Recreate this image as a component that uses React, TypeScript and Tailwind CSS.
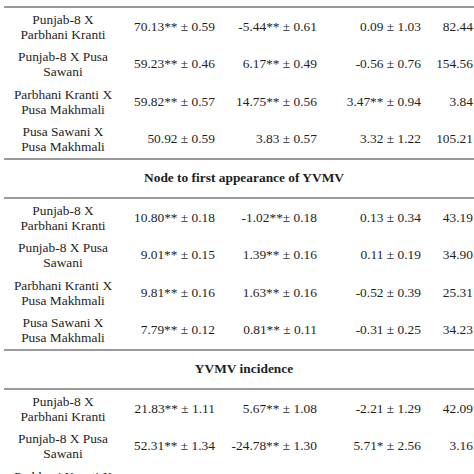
import React from "react";

type Row = { name: [string, string]; v: [string, string, string, string] };

const s1: Row[] = [
  { name: ["Punjab-8 X", "Parbhani Kranti"], v: ["70.13** ± 0.59", "-5.44** ± 0.61", "0.09 ± 1.03", "82.44"] },
  { name: ["Punjab-8 X Pusa", "Sawani"], v: ["59.23** ± 0.46", "6.17** ± 0.49", "-0.56 ± 0.76", "154.56"] },
  { name: ["Parbhani Kranti X", "Pusa Makhmali"], v: ["59.82** ± 0.57", "14.75** ± 0.56", "3.47** ± 0.94", "3.84"] },
  { name: ["Pusa Sawani X", "Pusa Makhmali"], v: ["50.92 ± 0.59", "3.83 ± 0.57", "3.32 ± 1.22", "105.21"] },
];
const s2: Row[] = [
  { name: ["Punjab-8 X", "Parbhani Kranti"], v: ["10.80** ± 0.18", "-1.02**± 0.18", "0.13 ± 0.34", "43.19"] },
  { name: ["Punjab-8 X Pusa", "Sawani"], v: ["9.01** ± 0.15", "1.39** ± 0.16", "0.11 ± 0.19", "34.90"] },
  { name: ["Parbhani Kranti X", "Pusa Makhmali"], v: ["9.81** ± 0.16", "1.63** ± 0.16", "-0.52 ± 0.39", "25.31"] },
  { name: ["Pusa Sawani X", "Pusa Makhmali"], v: ["7.79** ± 0.12", "0.81** ± 0.11", "-0.31 ± 0.25", "34.23"] },
];
const s3: Row[] = [
  { name: ["Punjab-8 X", "Parbhani Kranti"], v: ["21.83** ± 1.11", "5.67** ± 1.08", "-2.21 ± 1.29", "42.09"] },
  { name: ["Punjab-8 X Pusa", "Sawani"], v: ["52.31** ± 1.34", "-24.78** ± 1.30", "5.71* ± 2.56", "3.16"] },
  { name: ["Parbhani Kranti X", "Pusa Makhmali"], v: ["", "", "", ""] },
];

function Line() {
  return <div className="h-[2px] bg-[#9a9a9a] ml-[4px]" />;
}

function TRow({ r }: { r: Row }) {
  return (
    <div className="flex h-[37.5px] items-center whitespace-nowrap">
      <div className="w-[126px] shrink-0 text-center leading-[15px]">
        <div>{r.name[0]}</div>
        <div>{r.name[1]}</div>
      </div>
      <div className="w-[89px] shrink-0 text-right">{r.v[0]}</div>
      <div className="w-[102px] shrink-0 text-right">{r.v[1]}</div>
      <div className="w-[104px] shrink-0 text-right">{r.v[2]}</div>
      <div className="w-[52px] shrink-0 text-right">{r.v[3]}</div>
    </div>
  );
}

function Header({ t }: { t: string }) {
  return (
    <div className="h-[37px] flex items-center justify-center pl-[14px] font-bold whitespace-nowrap">
      {t}
    </div>
  );
}

export default function App() {
  return (
    <div
      className="w-[474px] h-[474px] overflow-hidden bg-white text-[#1e1e1e] text-[13.4px] pt-[6px]"
      style={{ fontFamily: '"Liberation Serif", "Times New Roman", serif' }}
    >
      <Line />
      {s1.map((r, i) => (
        <TRow key={"a" + i} r={r} />
      ))}
      <Line />
      <Header t="Node to first appearance of YVMV" />
      <Line />
      {s2.map((r, i) => (
        <TRow key={"b" + i} r={r} />
      ))}
      <Line />
      <Header t="YVMV incidence" />
      <Line />
      {s3.map((r, i) => (
        <TRow key={"c" + i} r={r} />
      ))}
    </div>
  );
}
